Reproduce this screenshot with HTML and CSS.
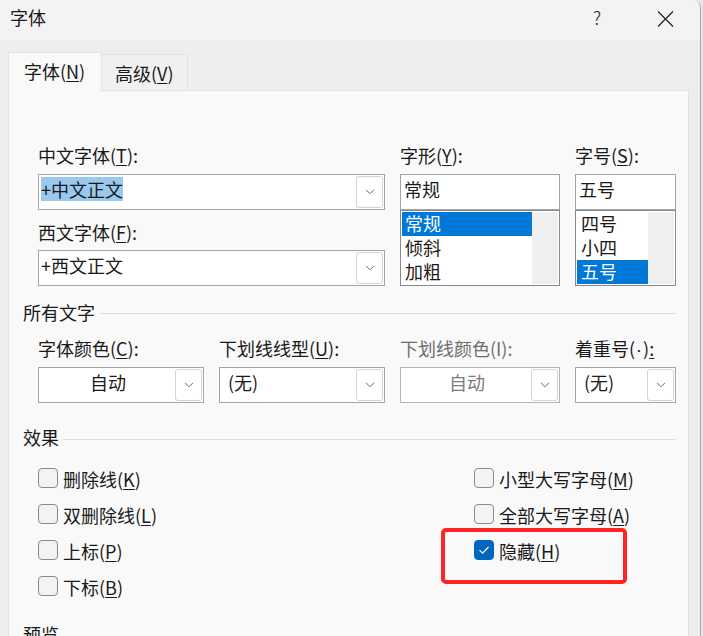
FILE: index.html
```html
<!DOCTYPE html>
<html lang="zh">
<head>
<meta charset="utf-8">
<title>字体</title>
<link rel="stylesheet" href="styles.css">
</head>
<body>
<div class="dialog">
  <div class="titlebar">
    <span class="title">字体</span>
    <span class="help">?</span>
    <span class="close"><svg width="17" height="16" viewBox="0 0 17 16"><path d="M1 0.5 L16 15.5 M16 0.5 L1 15.5" stroke="#1a1a1a" stroke-width="1.1" fill="none"/></svg></span>
  </div>
  <div class="body">
    <div class="tabs">
      <div class="tab active">字体(<u>N</u>)</div>
      <div class="tab">高级(<u>V</u>)</div>
    </div>
    <div class="panel">
      <div class="font-grid">
        <div class="col">
          <div class="lbl">中文字体(<u>T</u>):</div>
          <div class="combo"><span class="val"><span class="hl">+中文正文</span></span><span class="btn"><svg width="10" height="6" viewBox="0 0 10 6"><path d="M1 0.8 L5 4.8 L9 0.8" stroke="#6a6a6a" stroke-width="1" fill="none"/></svg></span></div>
          <div class="lbl second">西文字体(<u>F</u>):</div>
          <div class="combo"><span class="val">+西文正文</span><span class="btn"><svg width="10" height="6" viewBox="0 0 10 6"><path d="M1 0.8 L5 4.8 L9 0.8" stroke="#6a6a6a" stroke-width="1" fill="none"/></svg></span></div>
        </div>
        <div class="col">
          <div class="lbl">字形(<u>Y</u>):</div>
          <div class="input">常规</div>
          <div class="list">
            <div class="items items-style">
              <div class="item sel">常规</div>
              <div class="item">倾斜</div>
              <div class="item">加粗</div>
            </div>
            <div class="scroll"></div>
          </div>
        </div>
        <div class="col">
          <div class="lbl">字号(<u>S</u>):</div>
          <div class="input">五号</div>
          <div class="list">
            <div class="items items-size">
              <div class="item">四号</div>
              <div class="item">小四</div>
              <div class="item sel">五号</div>
            </div>
            <div class="scroll"></div>
          </div>
        </div>
      </div>

      <div class="section first-sec"><span class="sec-text">所有文字</span><span class="rule"></span></div>
      <div class="attr-grid">
        <div class="col">
          <div class="lbl">字体颜色(<u>C</u>):</div>
          <div class="combo"><span class="val center">自动</span><span class="btn"><svg width="10" height="6" viewBox="0 0 10 6"><path d="M1 0.8 L5 4.8 L9 0.8" stroke="#6a6a6a" stroke-width="1" fill="none"/></svg></span></div>
        </div>
        <div class="col">
          <div class="lbl">下划线线型(<u>U</u>):</div>
          <div class="combo"><span class="val pad">(无)</span><span class="btn"><svg width="10" height="6" viewBox="0 0 10 6"><path d="M1 0.8 L5 4.8 L9 0.8" stroke="#6a6a6a" stroke-width="1" fill="none"/></svg></span></div>
        </div>
        <div class="col">
          <div class="lbl disabled">下划线颜色(I):</div>
          <div class="combo off"><span class="val center">自动</span><span class="btn"><svg width="10" height="6" viewBox="0 0 10 6"><path d="M1 0.8 L5 4.8 L9 0.8" stroke="#6a6a6a" stroke-width="1" fill="none"/></svg></span></div>
        </div>
        <div class="col">
          <div class="lbl">着重号(<span class="dot">·</span>)<u>:</u></div>
          <div class="combo"><span class="val pad">(无)</span><span class="btn"><svg width="10" height="6" viewBox="0 0 10 6"><path d="M1 0.8 L5 4.8 L9 0.8" stroke="#6a6a6a" stroke-width="1" fill="none"/></svg></span></div>
        </div>
      </div>

      <div class="section effect-sec"><span class="sec-text">效果</span><span class="rule"></span></div>
      <div class="checks">
        <div class="check-col left">
          <div class="check"><span class="box"></span><span class="ctext">删除线(<u>K</u>)</span></div>
          <div class="check"><span class="box"></span><span class="ctext">双删除线(<u>L</u>)</span></div>
          <div class="check"><span class="box"></span><span class="ctext">上标(<u>P</u>)</span></div>
          <div class="check"><span class="box"></span><span class="ctext">下标(<u>B</u>)</span></div>
        </div>
        <div class="check-col">
          <div class="check"><span class="box"></span><span class="ctext">小型大写字母(<u>M</u>)</span></div>
          <div class="check"><span class="box"></span><span class="ctext">全部大写字母(<u>A</u>)</span></div>
          <div class="check"><span class="box checked"><svg width="20" height="20" viewBox="0 0 20 20"><path d="M5.5 10.2 L8.6 13.2 L14.5 7" stroke="#ffffff" stroke-width="1.1" fill="none"/></svg></span><span class="ctext">隐藏(<u>H</u>)</span></div>
        </div>
      </div>

      <div class="section preview-sec"><span class="sec-text">预览</span></div>
    </div>
  </div>
  <div class="mark"></div>
</div>
</body>
</html>
```
FILE: styles.css
```css
* { box-sizing: border-box; }
html, body { margin: 0; padding: 0; }
body {
  width: 703px;
  height: 636px;
  overflow: hidden;
  background: #e6e6e6;
  font-family: "Noto Sans CJK SC", "Microsoft YaHei", sans-serif;
  font-size: 18px;
  color: #1a1a1a;
}
u {
  text-decoration-thickness: 1px;
  text-underline-offset: 2px;
}
.dialog {
  position: relative;
  width: 701px;
  height: 636px;
  background: #eeeeee;
  border-right: 1px solid #a8a8a8;
  border-top-right-radius: 8px;
  overflow: hidden;
}
.titlebar {
  height: 40px;
  background: #f3f3f3;
  display: flex;
  align-items: center;
  padding-bottom: 6px;
}
.title {
  margin-left: 10px;
  line-height: 24px;
  flex: 1;
}
.help {
  line-height: 24px;
  margin-right: 56px;
  font-weight: 300;
  color: #222;
}
.close {
  display: flex;
  margin-right: 26px;
  margin-top: 3px;
}
.body {
  padding: 12px 0 0 8px;
}
.tabs {
  display: flex;
  align-items: flex-end;
  height: 38px;
}
.tab {
  height: 36px;
  width: 86px;
  padding: 6px 0 0 13px;
  line-height: 24px;
  background: #f0f0f0;
  border: 1px solid #e2e2e2;
  border-left: none;
  border-bottom: none;
}
.tab.active {
  position: relative;
  z-index: 1;
  height: 39px;
  margin-bottom: -1px;
  width: 94px;
  padding-left: 15px;
  background: #f9f9f9;
  border-left: 1px solid #e2e2e2;
}
.panel {
  width: 681px;
  height: 546px;
  background: #f9f9f9;
  border: 1px solid #e2e2e2;
  border-bottom: none;
  padding: 54px 12px 0 14px;
}
.font-grid {
  display: grid;
  grid-template-columns: 347px 160px 101px;
  column-gap: 15px;
  margin-left: 15px;
}
.attr-grid {
  display: grid;
  grid-template-columns: 166px 166px 160px 101px;
  column-gap: 15px;
  margin-left: 15px;
  margin-top: 12px;
}
.lbl {
  line-height: 20px;
  height: 24px;
  margin-bottom: 5px;
  white-space: nowrap;
}
.lbl.second {
  margin-top: 12px;
  margin-bottom: 4px;
}
.lbl.disabled { color: #6e6e6e; }
.dot {
  font-family: "Liberation Sans", sans-serif;
  padding: 0 1px;
}
.combo {
  height: 36px;
  border: 1px solid #a5a5a5;
  background: #ffffff;
  display: flex;
  align-items: center;
  padding-left: 2px;
}
.combo.off { border-color: #b4b4b4; color: #7c7c7c; }
.val {
  flex: 1;
  line-height: 24px;
  margin-bottom: 6px;
  white-space: nowrap;
}
.val.center { text-align: center; }
.val.pad { padding-left: 6px; }
.hl {
  background: #99c9ef;
  display: inline-block;
  line-height: 24px;
}
.btn {
  width: 27px;
  height: 32px;
  margin-right: 1px;
  border: 1px solid #d4d4d4;
  border-radius: 3px;
  background: #ffffff;
  display: flex;
  align-items: center;
  justify-content: center;
}
.input {
  height: 36px;
  border: 1px solid #a5a5a5;
  background: #ffffff;
  padding-left: 3px;
  line-height: 28px;
}
.list {
  height: 76px;
  border: 1px solid #86898f;
  background: #ffffff;
  display: flex;
  padding: 1px;
}
.items { flex: 1; }
.item {
  height: 24px;
  line-height: 22px;
  padding-left: 3px;
}
.items-size .item { padding-left: 4px; }
.item.sel {
  background: #0078d7;
  color: #ffffff;
}
.scroll {
  width: 26px;
  background: #efefef;
}
.section {
  display: flex;
  align-items: center;
  height: 24px;
}
.sec-text {
  line-height: 20px;
  height: 24px;
}
.rule {
  flex: 1;
  height: 1px;
  background: #dedede;
  margin-bottom: 2px;
}
.first-sec { margin-top: 16px; }
.first-sec .rule { margin-left: 5px; }
.effect-sec { margin-top: 24px; }
.effect-sec .rule { margin-left: 4px; margin-bottom: 0; }
.preview-sec { margin-top: 20px; }
.checks {
  display: flex;
  margin-left: 15px;
  margin-top: 9px;
}
.check-col {
  display: flex;
  flex-direction: column;
}
.check-col.left { width: 436px; }
.check {
  height: 36px;
  display: flex;
  align-items: center;
  gap: 5px;
  white-space: nowrap;
}
.ctext {
  line-height: 24px;
  margin-top: 1px;
}
.box {
  width: 20px;
  height: 20px;
  border: 1px solid #8a8a8a;
  border-radius: 4px;
  background: #f3f3f3;
  display: flex;
}
.box.checked {
  background: #0067c0;
  border-color: #0067c0;
}
.box.checked svg { margin: -1px; }
.mark {
  position: absolute;
  left: 441px;
  top: 528px;
  width: 186px;
  height: 56px;
  border: 4px solid #fe2424;
  border-radius: 5px;
}
```
